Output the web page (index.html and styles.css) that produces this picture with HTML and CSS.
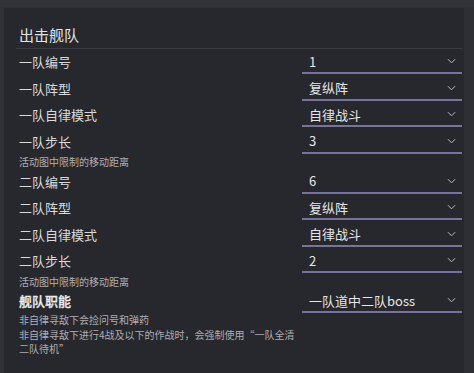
FILE: index.html
```html
<!DOCTYPE html>
<html lang="zh-CN">
<head>
  <meta charset="UTF-8" />
  <title>出击舰队</title>
  <link rel="stylesheet" href="styles.css">
</head>
<body>
  <div class="topbar"></div>
  <div class="frame">
    <div class="panel">
      <div class="title">出击舰队</div>

      <div class="row">
        <div class="label">一队编号</div>
        <div class="select"><span>1</span><svg class="chev" viewBox="0 0 10 6"><path d="M1 1 L5 5 L9 1"/></svg></div>
      </div>
      <div class="row">
        <div class="label">一队阵型</div>
        <div class="select"><span>复纵阵</span><svg class="chev" viewBox="0 0 10 6"><path d="M1 1 L5 5 L9 1"/></svg></div>
      </div>
      <div class="row">
        <div class="label">一队自律模式</div>
        <div class="select"><span>自律战斗</span><svg class="chev" viewBox="0 0 10 6"><path d="M1 1 L5 5 L9 1"/></svg></div>
      </div>
      <div class="row">
        <div class="label">一队步长</div>
        <div class="select"><span>3</span><svg class="chev" viewBox="0 0 10 6"><path d="M1 1 L5 5 L9 1"/></svg></div>
      </div>
      <div class="desc">活动图中限制的移动距离</div>

      <div class="row">
        <div class="label">二队编号</div>
        <div class="select"><span>6</span><svg class="chev" viewBox="0 0 10 6"><path d="M1 1 L5 5 L9 1"/></svg></div>
      </div>
      <div class="row">
        <div class="label">二队阵型</div>
        <div class="select"><span>复纵阵</span><svg class="chev" viewBox="0 0 10 6"><path d="M1 1 L5 5 L9 1"/></svg></div>
      </div>
      <div class="row">
        <div class="label">二队自律模式</div>
        <div class="select"><span>自律战斗</span><svg class="chev" viewBox="0 0 10 6"><path d="M1 1 L5 5 L9 1"/></svg></div>
      </div>
      <div class="row">
        <div class="label">二队步长</div>
        <div class="select"><span>2</span><svg class="chev" viewBox="0 0 10 6"><path d="M1 1 L5 5 L9 1"/></svg></div>
      </div>
      <div class="desc">活动图中限制的移动距离</div>

      <div class="row">
        <div class="label strong">舰队职能</div>
        <div class="select"><span>一队道中二队boss</span><svg class="chev" viewBox="0 0 10 6"><path d="M1 1 L5 5 L9 1"/></svg></div>
      </div>
      <div class="desc long">非自律寻敌下会捡问号和弹药<br>非自律寻敌下进行4战及以下的作战时，会强制使用“一队全清二队待机”</div>
    </div>
    <div class="scroll"></div>
  </div>
</body>
</html>
```

FILE: styles.css
```css
* {
  box-sizing: border-box;
  margin: 0;
  padding: 0;
}

html, body {
  height: 100%;
}

body {
  background: #2b2c31;
  font-family: "Noto Sans CJK SC", "Noto Sans", sans-serif;
  color: #dcdcdc;
  display: flex;
  flex-direction: column;
  overflow: hidden;
}

.topbar {
  height: 8px;
  background: #323339;
  border-bottom: 1px solid #2e2f35;
}

.frame {
  flex: 1;
  display: flex;
  border-left: 4px solid #313238;
}

.panel {
  width: 460px;
  background: #27282d;
  padding: 0 2px 0 15px;
}

.scroll {
  flex: 1;
  background: #2e2f34;
}

/* heading with divider */
.title {
  height: 41px;
  padding-top: 16px;
  font-size: 15px;
  line-height: 22px;
  color: #e2e2e2;
  border-bottom: 1px solid #3b3c42;
  margin-left: -3px;
  padding-left: 3px;
}

.row {
  display: grid;
  grid-template-columns: 1fr 160px;
  height: 26.5px;
}

.label {
  font-size: 13px;
  line-height: 26px;
  color: #dadada;
}

.label.strong {
  font-weight: 500;
  color: #ececec;
  -webkit-text-stroke: 0.3px #ececec;
}

.select {
  height: 25px;
  display: flex;
  align-items: center;
  justify-content: space-between;
  padding: 1px 6px 0 7px;
  border-bottom: 2px solid #77739a;
  font-size: 13px;
  color: #e6e6e6;
}

.chev {
  width: 9px;
  height: 6px;
  fill: none;
  stroke: #bdbdc2;
  stroke-width: 1.1;
}

.desc {
  font-size: 10px;
  line-height: 13.5px;
  color: #aeaeb2;
}

.desc.long {
  width: 276px;
  line-height: 14.5px;
  margin-top: -1.5px;
}
```
